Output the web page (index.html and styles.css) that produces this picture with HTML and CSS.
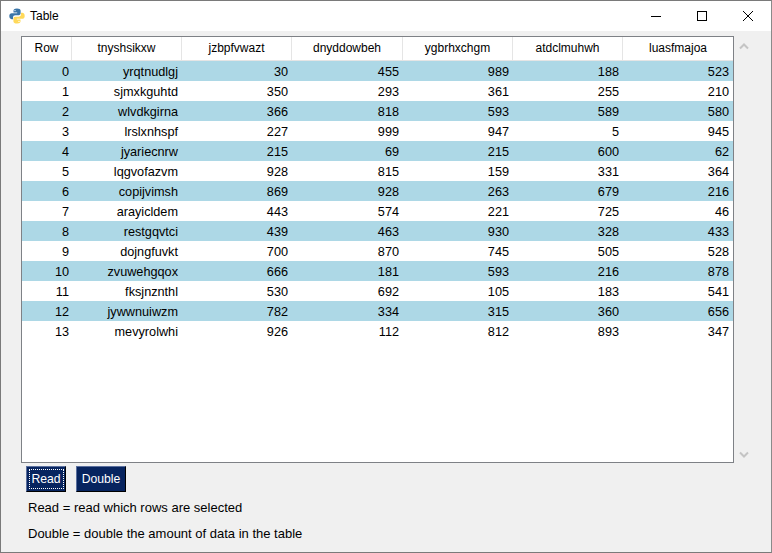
FILE: index.html
```html
<!DOCTYPE html>
<html lang="en">
<head>
    <meta charset="UTF-8">
    <title>Table</title>
    <link rel="stylesheet" href="styles.css">
</head>
<body>
    <div class="window">
        <div class="titlebar">
            <svg class="app-icon" width="16" height="16" viewBox="0 0 16 16">
                <path fill="#3a75a8" d="M8 0.5C5 0.5 4.5 1.6 4.5 2.8V4.5H8.2V5.2H2.8C1.2 5.2 0.3 6.4 0.3 8.1C0.3 9.9 1.2 11.2 2.6 11.2H4V9.4C4 8.1 5 7.2 6.3 7.2H9.8C10.9 7.2 11.6 6.4 11.6 5.3V2.8C11.6 1.4 10.2 0.5 8 0.5Z"/>
                <path fill="#ffd95a" d="M8 15.5C11 15.5 11.5 14.4 11.5 13.2V11.5H7.8V10.8H13.2C14.8 10.8 15.7 9.6 15.7 7.9C15.7 6.1 14.8 4.8 13.4 4.8H12V6.6C12 7.9 11 8.8 9.7 8.8H6.2C5.1 8.8 4.4 9.6 4.4 10.7V13.2C4.4 14.6 5.8 15.5 8 15.5Z"/>
                <circle cx="6" cy="2.6" r="0.7" fill="#fff"/>
                <circle cx="10" cy="13.4" r="0.7" fill="#fff"/>
            </svg>
            <span class="title">Table</span>
            <div class="controls">
                <svg class="control" width="46" height="30" viewBox="0 0 46 30"><path d="M18 15.5H28" stroke="#000" fill="none"/></svg>
                <svg class="control" width="46" height="30" viewBox="0 0 46 30"><rect x="18.5" y="10.5" width="9" height="9" stroke="#000" fill="none"/></svg>
                <svg class="control" width="46" height="30" viewBox="0 0 46 30"><path d="M18 10L28 20M28 10L18 20" stroke="#000" fill="none"/></svg>
            </div>
        </div>
        <div class="content">
            <div class="table-row">
                <div class="table-box">
                    <table class="data">
                        <colgroup>
                            <col class="col-row"><col class="col-wide"><col class="col-wide"><col class="col-wider"><col class="col-wide"><col class="col-wide"><col class="col-wide">
                        </colgroup>
                        <thead>
                            <tr><th>Row</th><th>tnyshsikxw</th><th>jzbpfvwazt</th><th>dnyddowbeh</th><th>ygbrhxchgm</th><th>atdclmuhwh</th><th>luasfmajoa</th></tr>
                        </thead>
                        <tbody>
                            <tr class="odd"><td>0</td><td>yrqtnudlgj</td><td>30</td><td>455</td><td>989</td><td>188</td><td>523</td></tr>
                            <tr><td>1</td><td>sjmxkguhtd</td><td>350</td><td>293</td><td>361</td><td>255</td><td>210</td></tr>
                            <tr class="odd"><td>2</td><td>wlvdkgirna</td><td>366</td><td>818</td><td>593</td><td>589</td><td>580</td></tr>
                            <tr><td>3</td><td>lrslxnhspf</td><td>227</td><td>999</td><td>947</td><td>5</td><td>945</td></tr>
                            <tr class="odd"><td>4</td><td>jyariecnrw</td><td>215</td><td>69</td><td>215</td><td>600</td><td>62</td></tr>
                            <tr><td>5</td><td>lqgvofazvm</td><td>928</td><td>815</td><td>159</td><td>331</td><td>364</td></tr>
                            <tr class="odd"><td>6</td><td>copijvimsh</td><td>869</td><td>928</td><td>263</td><td>679</td><td>216</td></tr>
                            <tr><td>7</td><td>arayicldem</td><td>443</td><td>574</td><td>221</td><td>725</td><td>46</td></tr>
                            <tr class="odd"><td>8</td><td>restgqvtci</td><td>439</td><td>463</td><td>930</td><td>328</td><td>433</td></tr>
                            <tr><td>9</td><td>dojngfuvkt</td><td>700</td><td>870</td><td>745</td><td>505</td><td>528</td></tr>
                            <tr class="odd"><td>10</td><td>zvuwehgqox</td><td>666</td><td>181</td><td>593</td><td>216</td><td>878</td></tr>
                            <tr><td>11</td><td>fksjnznthl</td><td>530</td><td>692</td><td>105</td><td>183</td><td>541</td></tr>
                            <tr class="odd"><td>12</td><td>jywwnuiwzm</td><td>782</td><td>334</td><td>315</td><td>360</td><td>656</td></tr>
                            <tr><td>13</td><td>mevyrolwhi</td><td>926</td><td>112</td><td>812</td><td>893</td><td>347</td></tr>
                        </tbody>
                    </table>
                </div>
                <div class="scrollbar">
                    <svg width="10" height="7" viewBox="0 0 10 7"><path d="M1 5.5L5 1.5L9 5.5" stroke="#c4c4c4" stroke-width="2" fill="none"/></svg>
                    <svg width="10" height="7" viewBox="0 0 10 7"><path d="M1 1.5L5 5.5L9 1.5" stroke="#c4c4c4" stroke-width="2" fill="none"/></svg>
                </div>
            </div>
            <div class="buttons">
                <button class="button button-focus"><span>Read</span></button>
                <button class="button"><span>Double</span></button>
            </div>
            <p class="note">Read = read which rows are selected</p>
            <p class="note">Double = double the amount of data in the table</p>
        </div>
    </div>
</body>
</html>
```

FILE: styles.css
```css
html, body {
    margin: 0;
    height: 100%;
}

body {
    background-color: #f0f0f0;
    font-family: 'Liberation Sans', Arial, sans-serif;
    font-size: 13px;
    color: #000;
    overflow: hidden;
}

.window {
    box-sizing: border-box;
    height: 553px;
    width: 772px;
    border: 1px solid #7a7a7a;
    border-right-color: #8a8a8a;
    display: flex;
    flex-direction: column;
}

.titlebar {
    height: 30px;
    background-color: #fff;
    display: flex;
    align-items: center;
    padding-left: 8px;
    flex-shrink: 0;
}

.app-icon {
    margin-right: 5px;
}

.title {
    flex: 1;
    padding-bottom: 1px;
    font-size: 12px;
}

.controls {
    display: flex;
}

.control {
    display: block;
}

.content {
    flex: 1;
    background-color: #f0f0f0;
    padding: 5px 0 0 20px;
}

.table-row {
    display: flex;
    height: 427px;
}

.table-box {
    box-sizing: border-box;
    width: 713px;
    height: 427px;
    border: 1px solid #7e8186;
    background-color: #fff;
}

.data {
    border-collapse: separate;
    border-spacing: 0;
    table-layout: fixed;
    width: 711px;
}

.col-row {
    width: 50px;
}

.col-wide {
    width: 110px;
}

.col-wider {
    width: 111px;
}

.data th {
    height: 24px;
    padding: 0 0 1px;
    font-weight: normal;
    font-size: 12px;
    text-align: center;
    border-right: 1px solid #e5e5e5;
    border-bottom: 1px solid #e5e5e5;
    box-sizing: border-box;
}

.data th:last-child {
    border-right: none;
}

.data td {
    height: 20px;
    padding: 1px 4px 0 0;
    font-size: 12.7px;
    text-align: right;
    box-sizing: border-box;
}

.data td:first-child {
    padding-right: 3px;
}

.odd {
    background-color: #add8e6;
}

.scrollbar {
    width: 16px;
    height: 427px;
    box-sizing: border-box;
    padding: 7px 0 5px 3px;
    display: flex;
    flex-direction: column;
    justify-content: space-between;
    align-items: center;
}

.buttons {
    display: flex;
    gap: 10px;
    margin: 3px 0 0 5px;
}

.button {
    height: 26px;
    padding: 2px 1.5px;
    background-color: #07245f;
    color: #fff;
    font-family: inherit;
    font-size: 12.2px;
    border: 1px solid;
    border-color: #5a6f9e #000 #000 #5a6f9e;
}

.button span {
    display: block;
    padding: 0 2px;
    height: 18px;
    line-height: 18px;
    border: 1px dotted transparent;
}

.button-focus span {
    border-color: #fff;
}

.note {
    margin: 0;
    height: 26px;
    line-height: 26px;
    padding-left: 7px;
}

.buttons + .note {
    margin-top: 3px;
}
```
